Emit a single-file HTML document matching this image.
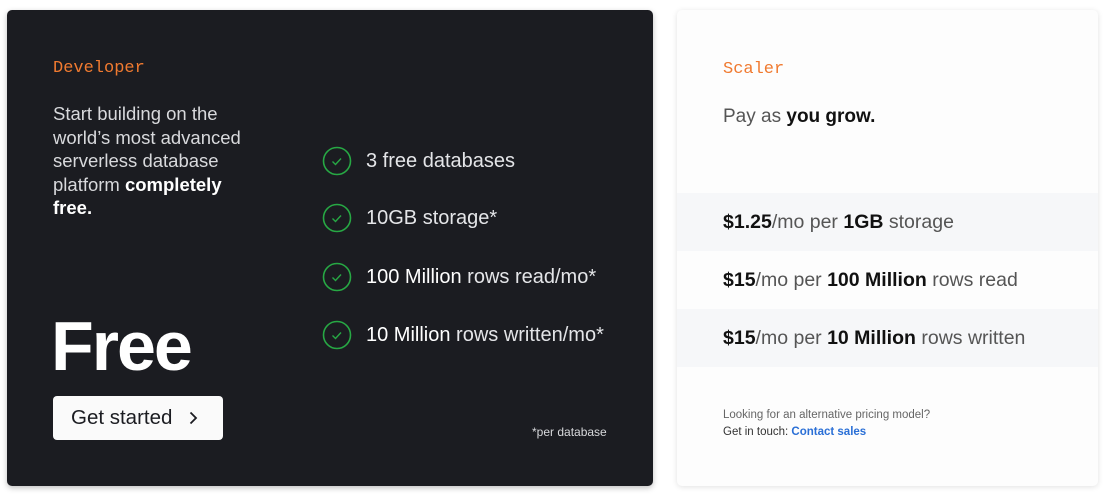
<!DOCTYPE html>
<html><head><style>
*{margin:0;padding:0;box-sizing:border-box}
body{width:1108px;height:495px;background:#fff;font-family:"Liberation Sans",sans-serif;position:relative;overflow:hidden}
.dark{position:absolute;left:7px;top:10px;width:646px;height:476px;background:#1b1c21;border-radius:5px;box-shadow:0 2px 6px rgba(0,0,0,.25)}
.light{position:absolute;left:677px;top:10px;width:421px;height:476px;background:#fdfdfd;border-radius:5px;box-shadow:0 1px 6px rgba(0,0,0,.12)}
.mono{font-family:"Liberation Mono",monospace;font-size:17px;color:#f07a30;position:absolute}
.abs{position:absolute}
.para{left:46px;top:92px;width:210px;color:#d8d9dc;font-size:18.5px;line-height:23.5px}
.para b{color:#fff}
.free{left:44px;top:296px;font-size:70px;font-weight:bold;color:#fff;letter-spacing:-2px}
.btn{left:46px;top:386px;width:170px;height:44px;background:#fafafa;border-radius:4px;font-size:20.5px;color:#1b1c21;padding:10px 0 0 18px}
.item{left:315px;height:30px;color:#e4e5e8;font-size:20px;display:flex;align-items:center}
.item svg{margin-right:14px}
.item b{font-weight:normal;color:#fff}
.row{position:absolute;left:0;width:421px;height:58px;font-size:19.5px;color:#555;padding:18px 0 0 46px}
.row b{color:#111}
</style></head><body>
<div class="dark">
<div class="mono" style="left:46px;top:49px">Developer</div>
<div class="abs para">Start building on the world’s most advanced serverless database platform <b>completely free.</b></div>
<div class="abs free">Free</div>
<div class="abs btn">Get started <svg style="position:absolute;left:135px;top:15px" width="10" height="14" viewBox="0 0 10 14"><path d="M2.5 1.5l5.5 5.5-5.5 5.5" fill="none" stroke="#1b1c21" stroke-width="1.8"/></svg></div>
<div class="abs item" style="top:136px"><svg width="30" height="30" viewBox="0 0 30 30"><circle cx="15" cy="15" r="13.5" fill="none" stroke="#27a844" stroke-width="1.6"/><path d="M10.5 15.5l3 3 5.5-6" fill="none" stroke="#27a844" stroke-width="1.4"/></svg><span>3 free databases</span></div>
<div class="abs item" style="top:193px"><svg width="30" height="30" viewBox="0 0 30 30"><circle cx="15" cy="15" r="13.5" fill="none" stroke="#27a844" stroke-width="1.6"/><path d="M10.5 15.5l3 3 5.5-6" fill="none" stroke="#27a844" stroke-width="1.4"/></svg><span>10GB storage*</span></div>
<div class="abs item" style="top:252px"><svg width="30" height="30" viewBox="0 0 30 30"><circle cx="15" cy="15" r="13.5" fill="none" stroke="#27a844" stroke-width="1.6"/><path d="M10.5 15.5l3 3 5.5-6" fill="none" stroke="#27a844" stroke-width="1.4"/></svg><span><b>100 Million</b> rows read/mo*</span></div>
<div class="abs item" style="top:310px"><svg width="30" height="30" viewBox="0 0 30 30"><circle cx="15" cy="15" r="13.5" fill="none" stroke="#27a844" stroke-width="1.6"/><path d="M10.5 15.5l3 3 5.5-6" fill="none" stroke="#27a844" stroke-width="1.4"/></svg><span><b>10 Million</b> rows written/mo*</span></div>
<div class="abs" style="left:525px;top:415px;font-size:12px;color:#d8d9dc">*per database</div>
</div>
<div class="light">
<div class="mono" style="left:46px;top:50px">Scaler</div>
<div class="abs" style="left:46px;top:96px;font-size:19px;color:#555">Pay as <b style="color:#111">you grow.</b></div>
<div class="row" style="top:183px;background:#f6f7f9"><b>$1.25</b>/mo per <b>1GB</b> storage</div>
<div class="row" style="top:241px"><b>$15</b>/mo per <b>100 Million</b> rows read</div>
<div class="row" style="top:299px;background:#f6f7f9"><b>$15</b>/mo per <b>10 Million</b> rows written</div>
<div class="abs" style="left:46px;top:397px;font-size:11.5px;line-height:17px;color:#666">Looking for an alternative pricing model?<br><span style="color:#333">Get in touch: </span><b style="color:#2a6fd6">Contact sales</b></div>
</div>
</body></html>
